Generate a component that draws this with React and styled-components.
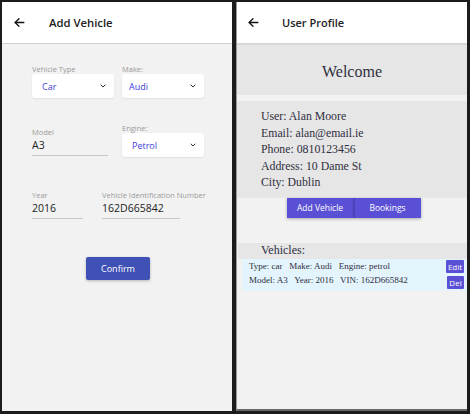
import styled, { createGlobalStyle } from "styled-components";

const GlobalStyle = createGlobalStyle`
  html, body { margin: 0; padding: 0; }
  body { width: 470px; height: 414px; overflow: hidden; background: #1c1c1c; }
`;

const Frame = styled.div`
  display: flex;
  gap: 4px;
  width: 470px;
  height: 414px;
  box-sizing: border-box;
  padding: 2px 3px 3px 2px;
  background: #1c1c1c;
`;

const Panel = styled.div`
  flex: 1;
  display: flex;
  flex-direction: column;
  background: #f2f2f2;
  box-sizing: border-box;
  border-left: ${({ inset }) => (inset ? "1px solid #9a9a9a" : "none")};
  border-bottom: ${({ inset }) => (inset ? "2px solid #6a6a6a" : "none")};
  overflow: hidden;
`;

const Header = styled.div`
  display: flex;
  align-items: center;
  height: 41px;
  flex-shrink: 0;
  background: #fff;
  border-bottom: ${({ thick }) => (thick ? "2px solid #d8d8d8" : "1px solid #cfcfcf")};
  padding-left: ${({ inset }) => (inset ? 10 : 11)}px;
  font-family: "Open Sans", "Noto Sans", sans-serif;
`;

const Back = styled.svg`
  width: 13px;
  height: 13px;
  margin-right: ${({ gap }) => gap}px;
`;

const Title = styled.span`
  font-size: ${({ size }) => size}px;
  font-weight: 600;
  color: #222;
`;

const Arrow = ({ gap }) => (
  <Back gap={gap} viewBox="0 0 24 24" fill="none" stroke="#111" strokeWidth="2.4" strokeLinecap="round" strokeLinejoin="round">
    <path d="M20 12H4" />
    <path d="M11 5l-7 7 7 7" />
  </Back>
);

const Form = styled.div`
  display: flex;
  flex-direction: column;
  padding: 21px 0 0 30px;
  font-family: "Open Sans", "Noto Sans", sans-serif;
`;

const Row = styled.div`
  display: flex;
  align-items: flex-start;
  gap: ${({ gap }) => gap}px;
  margin-bottom: ${({ mb }) => mb}px;
`;

const Field = styled.div`
  display: flex;
  flex-direction: column;
  width: ${({ w }) => w}px;
  margin-top: ${({ mt = 0 }) => mt}px;
`;

const Label = styled.span`
  font-size: 7.5px;
  font-weight: 400;
  color: #9a9a9a;
  line-height: 8px;
  white-space: nowrap;
`;

const SelectBox = styled.div`
  display: flex;
  align-items: center;
  justify-content: space-between;
  height: 24px;
  margin-top: 1px;
  box-sizing: border-box;
  padding: 0 7px 0 ${({ pl }) => pl}px;
  background: #fff;
  border-radius: 3px;
  box-shadow: 0 1px 2px rgba(0, 0, 0, 0.08);
  color: #3c3cd8;
  font-size: 9px;
  font-weight: 500;
`;

const Chevron = () => (
  <svg width="8" height="8" viewBox="0 0 24 24" fill="none" stroke="#333" strokeWidth="3" strokeLinecap="round" strokeLinejoin="round">
    <path d="M6 9l6 6 6-6" />
  </svg>
);

const Select = ({ w, label, value, pl = 10 }) => (
  <Field w={w}>
    <Label>{label}</Label>
    <SelectBox pl={pl}>
      {value}
      <Chevron />
    </SelectBox>
  </Field>
);

const Value = styled.span`
  font-size: 10.5px;
  color: #222;
  line-height: 12px;
  padding: 3px 0 4px;
  border-bottom: 1px solid #c8c8c8;
`;

const Input = ({ w, label, value, mt }) => (
  <Field w={w} mt={mt}>
    <Label>{label}</Label>
    <Value>{value}</Value>
  </Field>
);

const Confirm = styled.button`
  align-self: flex-start;
  margin-left: 54px;
  width: 64px;
  height: 23px;
  border: none;
  border-radius: 2px;
  background: #3f51b5;
  color: #fff;
  font-family: "Open Sans", "Noto Sans", sans-serif;
  font-size: 9px;
  box-shadow: 0 1px 3px rgba(0, 0, 0, 0.25);
`;

const Band = styled.div`
  background: ${({ bg }) => bg};
  font-family: "Liberation Serif", "Times New Roman", serif;
  color: #2f2f3f;
`;

const Welcome = styled(Band)`
  height: 50px;
  box-sizing: border-box;
  padding-top: 3px;
  display: flex;
  align-items: center;
  justify-content: center;
  font-size: 16px;
  margin-bottom: 6px;
`;

const Info = styled(Band)`
  display: flex;
  flex-direction: column;
  padding: 7px 0 7px 24px;
  font-size: 11.8px;
  line-height: 16.5px;
`;

const ButtonGroup = styled.div`
  display: flex;
  justify-content: center;
  padding-left: 3px;
  margin-bottom: 25px;
`;

const GroupButton = styled.button`
  width: 67px;
  height: 20px;
  border: none;
  border-left: ${({ divider }) => (divider ? "1px solid #4a40b8" : "none")};
  background: #5a50d5;
  color: #fff;
  font-family: "Open Sans", "Noto Sans", sans-serif;
  font-size: 8.5px;
  font-weight: 500;
  box-shadow: 0 1px 3px rgba(0, 0, 0, 0.3);
`;

const VehiclesTitle = styled(Band)`
  height: 16px;
  display: flex;
  align-items: center;
  padding-left: 23px;
  font-size: 12px;
  margin-left: 1px;
`;

const VehicleRow = styled.div`
  display: flex;
  align-items: center;
  justify-content: space-between;
  margin: 0 1px 0 5px;
  height: 32px;
  padding: 0 2px 0 7px;
  background: #e3f4fd;
  font-family: "Liberation Serif", "Times New Roman", serif;
  font-size: 9px;
  color: #2f2f3f;
`;

const VehicleText = styled.div`
  display: flex;
  flex-direction: column;
  line-height: 14px;
  margin-top: -3px;
  white-space: pre;
`;

const Actions = styled.div`
  display: flex;
  flex-direction: column;
  align-items: flex-end;
  gap: 3px;
`;

const SmallButton = styled.button`
  height: 13px;
  width: ${({ w }) => w}px;
  padding: 0;
  border: none;
  border-radius: 1px;
  background: #5a50d5;
  color: #fff;
  font-family: "Open Sans", "Noto Sans", sans-serif;
  font-size: 8px;
  line-height: 13px;
`;

export default function App() {
  return (
    <>
      <GlobalStyle />
      <Frame>
        <Panel>
          <Header>
            <Arrow gap={23} />
            <Title size={11.3}>Add Vehicle</Title>
          </Header>
          <Form>
            <Row gap={8} mb={26}>
              <Select w={82} label="Vehicle Type" value="Car" />
              <Select w={82} label="Make:" value="Audi" pl={7} />
            </Row>
            <Row gap={14} mb={34}>
              <Input w={76} label="Model" value="A3" mt={4} />
              <Select w={82} label="Engine:" value="Petrol" />
            </Row>
            <Row gap={19} mb={38}>
              <Input w={51} label="Year" value="2016" />
              <Input w={78} label="Vehicle Identification Number" value="162D665842" />
            </Row>
            <Confirm>Confirm</Confirm>
          </Form>
        </Panel>
        <Panel inset>
          <Header thick inset>
            <Arrow gap={22} />
            <Title size={11}>User Profile</Title>
          </Header>
          <Welcome bg="#e6e6e6">Welcome</Welcome>
          <Info bg="#e6e6e6">
            <span>User: Alan Moore</span>
            <span>Email: alan@email.ie</span>
            <span>Phone: 0810123456</span>
            <span>Address: 10 Dame St</span>
            <span>City: Dublin</span>
          </Info>
          <ButtonGroup>
            <GroupButton>Add Vehicle</GroupButton>
            <GroupButton divider>Bookings</GroupButton>
          </ButtonGroup>
          <VehiclesTitle bg="#e6e6e6">Vehicles:</VehiclesTitle>
          <VehicleRow>
            <VehicleText>
              <span>{"Type: car   Make: Audi   Engine: petrol"}</span>
              <span>{"Model: A3   Year: 2016   VIN: 162D665842"}</span>
            </VehicleText>
            <Actions>
              <SmallButton w={18}>Edit</SmallButton>
              <SmallButton w={17}>Del</SmallButton>
            </Actions>
          </VehicleRow>
        </Panel>
      </Frame>
    </>
  );
}
